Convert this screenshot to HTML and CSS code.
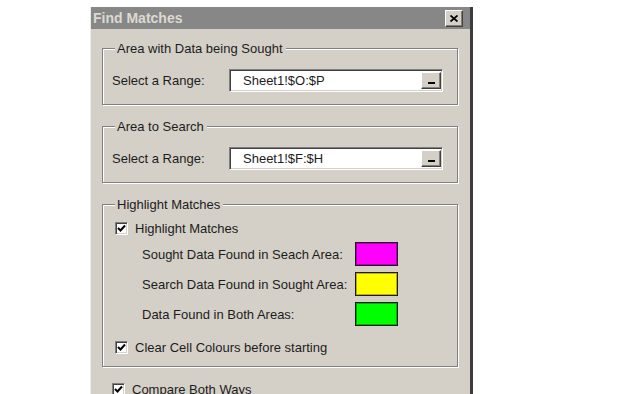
FILE: index.html
```html
<!DOCTYPE html>
<html lang="en">
<head>
  <meta charset="UTF-8" />
  <title>Find Matches</title>
  <link rel="stylesheet" href="styles.css">
</head>
<body>
  <div class="dialog">
    <div class="titlebar">
      <span class="title">Find Matches</span>
      <span class="close-btn">
        <svg width="8" height="7" viewBox="0 0 8 7"><path d="M0.5 0.5 L7.5 6.5 M7.5 0.5 L0.5 6.5" stroke="#000" stroke-width="1.7" fill="none"/></svg>
      </span>
    </div>

    <div class="dialog-body">
      <div class="group">
        <div class="group-title">Area with Data being Sought</div>
        <div class="range-row">
          <span class="range-label">Select a Range:</span>
          <div class="ref-edit">
            <span class="ref-text">Sheet1!$O:$P</span>
            <span class="ref-btn"><span class="ref-dash"></span></span>
          </div>
        </div>
      </div>

      <div class="group">
        <div class="group-title">Area to Search</div>
        <div class="range-row">
          <span class="range-label">Select a Range:</span>
          <div class="ref-edit">
            <span class="ref-text">Sheet1!$F:$H</span>
            <span class="ref-btn"><span class="ref-dash"></span></span>
          </div>
        </div>
      </div>

      <div class="group group-highlight">
        <div class="group-title">Highlight Matches</div>
        <div class="check-row first">
          <span class="checkbox"><svg width="9" height="9" viewBox="0 0 9 9"><polyline points="1,4 3.5,6.5 8,1.5" stroke="#000" stroke-width="2" fill="none"/></svg></span>
          <span>Highlight Matches</span>
        </div>
        <div class="color-row">
          <span class="color-label">Sought Data Found in Seach Area:</span>
          <span class="swatch magenta"></span>
        </div>
        <div class="color-row">
          <span class="color-label">Search Data Found in Sought Area:</span>
          <span class="swatch yellow"></span>
        </div>
        <div class="color-row">
          <span class="color-label">Data Found in Both Areas:</span>
          <span class="swatch green"></span>
        </div>
        <div class="check-row last">
          <span class="checkbox"><svg width="9" height="9" viewBox="0 0 9 9"><polyline points="1,4 3.5,6.5 8,1.5" stroke="#000" stroke-width="2" fill="none"/></svg></span>
          <span>Clear Cell Colours before starting</span>
        </div>
      </div>

      <div class="check-row compare">
        <span class="checkbox"><svg width="9" height="9" viewBox="0 0 9 9"><polyline points="1,4 3.5,6.5 8,1.5" stroke="#000" stroke-width="2" fill="none"/></svg></span>
        <span>Compare Both Ways</span>
      </div>
    </div>
  </div>
</body>
</html>
```

FILE: styles.css
```css
html, body { height: 394px; overflow: hidden; }
body { margin: 0; background: #fff; font-family: "Liberation Sans", Arial, sans-serif; font-size: 13px; color: #1c1c1c; }
.dialog { margin: 7px 0 0 90px; width: 379px; height: 420px; background: #d4d0c8; border-left: 1px solid #eeece6; border-right: 3px solid #3c3c3c; }
.titlebar { height: 22px; background: #878787; display: flex; align-items: center; justify-content: space-between; padding: 0 7px 0 2px; }
.title { font-weight: bold; font-size: 14px; color: #dcd9d2; }
.close-btn { width: 16px; height: 15px; display: flex; align-items: center; justify-content: center; background: #d4d0c8; border: 1px solid; border-color: #fff #404040 #404040 #fff; box-shadow: inset -1px -1px 0 #808080; }
.dialog-body { padding: 19px 12px 0 11px; }
.group { border: 1px solid #808080; box-shadow: 1px 1px 0 #fff, inset 1px 1px 0 #fff; padding: 0 0 12px 0; margin-bottom: 21px; }
.group-title { width: max-content; margin: -8px 0 0 12px; padding: 0 3px 0 2px; line-height: 15px; background: #d4d0c8; }
.range-row { display: flex; align-items: center; margin-top: 13px; padding-left: 9px; }
.range-label { width: 117px; }
.ref-edit { width: 212px; height: 21px; display: flex; align-items: center; justify-content: space-between; background: #fff; border: 1px solid; border-color: #808080 #fff #fff #808080; box-shadow: inset 1px 1px 0 #404040, inset -1px -1px 0 #d4d0c8; }
.ref-text { padding-left: 13px; }
.ref-btn { width: 20px; height: 17px; margin-right: 1px; display: flex; justify-content: center; align-items: flex-end; box-sizing: border-box; background: #d4d0c8; border: 1px solid; border-color: #fff #404040 #404040 #fff; box-shadow: inset -1px -1px 0 #808080; }
.ref-dash { width: 7px; height: 2px; background: #000; margin-bottom: 4px; }
.group-highlight { padding-bottom: 11px; }
.check-row { display: flex; align-items: center; gap: 7px; line-height: 15px; }
.group-highlight .check-row { padding-left: 12px; }
.check-row.first { margin-top: 9px; }
.check-row.last { margin-top: 14px; }
.check-row.compare { margin-left: 10px; margin-top: -6px; }
.checkbox { width: 11px; height: 11px; display: flex; align-items: center; justify-content: center; background: #fff; border: 1px solid; border-color: #808080 #fff #fff #808080; box-shadow: inset 1px 1px 0 #404040, inset -1px -1px 0 #d4d0c8; }
.color-row { display: flex; align-items: center; margin-top: 6px; padding-left: 39px; }
.color-label { width: 213px; }
.swatch { width: 41px; height: 22px; border: 1px solid #1a1a1a; box-shadow: inset 0 0 0 1px rgba(0, 0, 0, 0.3); }
.magenta { background: #ff00ff; }
.yellow { background: #ffff00; }
.green { background: #00ff00; }
```
